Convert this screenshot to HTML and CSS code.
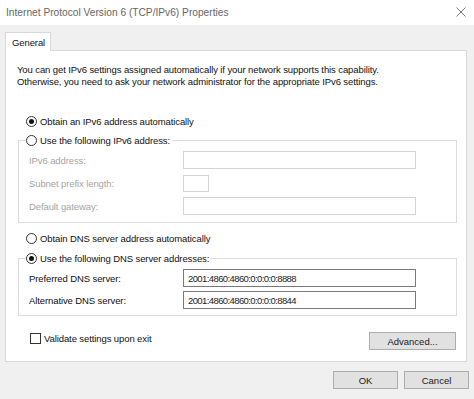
FILE: index.html
```html
<!DOCTYPE html>
<html lang="en">
<head>
  <meta charset="UTF-8" />
  <title>Internet Protocol Version 6 (TCP/IPv6) Properties</title>
  <link rel="stylesheet" href="styles.css">
</head>
<body>
  <div class="titlebar">
    <span class="title">Internet Protocol Version 6 (TCP/IPv6) Properties</span>
    <svg class="close" width="10" height="10" viewBox="0 0 10 10">
      <path d="M0.5 0.5 L9.5 9.5 M9.5 0.5 L0.5 9.5" stroke="#7a7a7a" stroke-width="1" fill="none"/>
    </svg>
  </div>
  <div class="dialog">
    <div class="tabs"><div class="tab">General</div></div>
    <div class="panel">
      <p class="intro">You can get IPv6 settings assigned automatically if your network supports this capability.<br>Otherwise, you need to ask your network administrator for the appropriate IPv6 settings.</p>

      <label class="radio-row first"><input type="radio" name="addr" checked> Obtain an IPv6 address automatically</label>
      <fieldset class="group disabled">
        <legend><label class="radio-row"><input type="radio" name="addr"> Use the following IPv6 address:</label></legend>
        <div class="field"><span>IPv6 address:</span><input type="text" disabled></div>
        <div class="field"><span>Subnet prefix length:</span><input type="text" class="short" disabled></div>
        <div class="field"><span>Default gateway:</span><input type="text" disabled></div>
      </fieldset>

      <label class="radio-row dns-auto"><input type="radio" name="dns"> Obtain DNS server address automatically</label>
      <fieldset class="group dns">
        <legend><label class="radio-row"><input type="radio" name="dns" checked> Use the following DNS server addresses:</label></legend>
        <div class="field"><span>Preferred DNS server:</span><input type="text" value="2001:4860:4860:0:0:0:0:8888"></div>
        <div class="field"><span>Alternative DNS server:</span><input type="text" value="2001:4860:4860:0:0:0:0:8844"></div>
      </fieldset>

      <div class="options">
        <label class="check"><input type="checkbox"> Validate settings upon exit</label>
        <button class="btn advanced">Advanced...</button>
      </div>
    </div>
    <div class="footer">
      <button class="btn">OK</button>
      <button class="btn">Cancel</button>
    </div>
  </div>
</body>
</html>
```

FILE: styles.css
```css
* { margin: 0; padding: 0; box-sizing: border-box; }
body {
  font-family: "Liberation Sans", Arial, sans-serif;
  font-size: 9.5px;
  letter-spacing: -0.1px;
  color: #111;
  background-color: #f0f0f0;
  width: 474px;
  height: 399px;
  overflow: hidden;
}
.titlebar {
  height: 25px;
  background-color: #fff;
  display: flex;
  align-items: center;
  justify-content: space-between;
  padding: 0 8px 1px 6px;
}
.title { font-size: 10.2px; letter-spacing: 0; color: #666; }
.dialog { padding: 7px 7px 0 5px; }
.tabs { display: flex; }
.tab {
  width: 46px;
  height: 19px;
  background-color: #fff;
  border: 1px solid #d9d9d9;
  border-bottom: none;
  padding: 4px 0 0 6px;
  margin-bottom: -1px;
  position: relative;
}
.panel {
  background-color: #fff;
  border: 1px solid #d9d9d9;
  padding: 13px 9px 11px 12px;
}
.intro { line-height: 11.5px; margin-left: -1px; }
.radio-row {
  display: flex;
  align-items: center;
  height: 14px;
  gap: 3px;
}
.radio-row.first { margin: 27px 0 0 8px; }
.radio-row.dns-auto { margin: 8px 0 0 8px; }
input[type=radio] {
  appearance: none;
  width: 11px;
  height: 11px;
  border: 1px solid #333;
  border-radius: 50%;
  background: #fff;
  display: grid;
  place-items: center;
}
input[type=radio]:checked::before {
  content: "";
  width: 5px;
  height: 5px;
  border-radius: 50%;
  background: #111;
}
.group {
  border: 1px solid #dcdcdc;
  margin-top: 5px;
  padding: 0 10px 7px 10px;
  display: flex;
  flex-direction: column;
  gap: 5px;
}
.group legend { padding: 0 2px 0 0; margin-left: -3px; }
.group.dns { margin-top: 6px; padding-bottom: 6px; gap: 4px; }
.field {
  display: flex;
  align-items: center;
  height: 18px;
}
.field:first-of-type { margin-top: 4px; }
.field span { width: 154px; }
.field input {
  width: 233px;
  height: 18px;
  border: 1px solid #7a7a7a;
  font: inherit;
  letter-spacing: -0.6px;
  padding: 0 4px;
  color: #222;
  background: #fff;
}
.disabled .field span { color: #a5a5a5; }
.disabled .field input { border-color: #d4d4d4; }
.field input.short { width: 26px; height: 17px; }
.options {
  display: flex;
  justify-content: space-between;
  align-items: flex-start;
  margin-top: 16px;
}
.check {
  display: flex;
  align-items: center;
  gap: 3px;
  margin: 1px 0 0 12px;
}
input[type=checkbox] {
  appearance: none;
  width: 11px;
  height: 11px;
  border: 1px solid #333;
  background: #fff;
}
.btn {
  font: inherit;
  color: #1a1a1a;
  background-color: #e1e1e1;
  border: 1px solid #adadad;
  height: 18px;
  width: 65px;
}
.btn.advanced { width: 87px; margin-right: 1px; }
.footer {
  display: flex;
  justify-content: flex-end;
  gap: 6px;
  margin-top: 9px;
  margin-right: -2px;
}
```
